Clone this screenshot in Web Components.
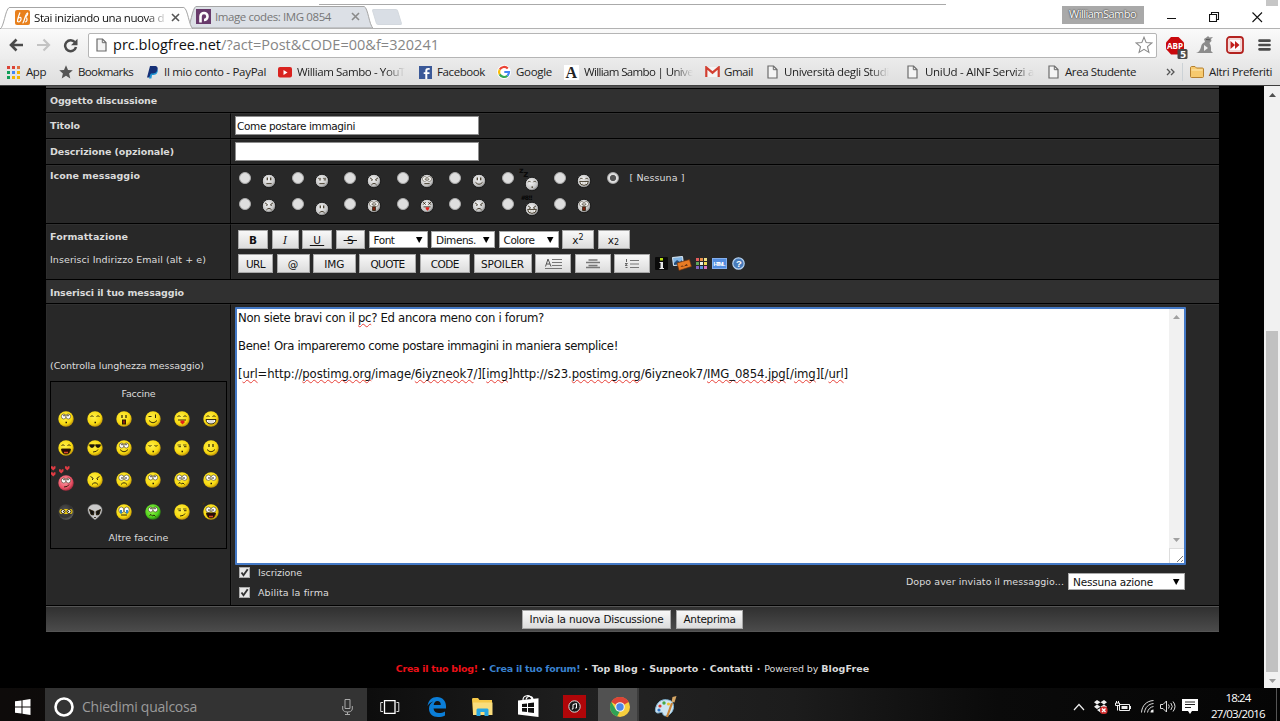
<!DOCTYPE html>
<html lang="it">
<head>
<meta charset="utf-8">
<title>Stai iniziando una nuova discussione</title>
<style>
  html, body {
    margin: 0;
    width: 1280px;
    height: 721px;
    overflow: hidden;
    background: #000;
  }
</style>
</head>
<body>
<desktop-screen></desktop-screen>

<script>
/****** Helpers ******/
const define = (name, html, setup) => {
  const template = document.createElement('template');
  template.innerHTML = html;

  customElements.define(name, class extends HTMLElement {
    constructor () {
      super();
      this.attachShadow({ mode: 'open' });
      this.shadowRoot.appendChild(template.content.cloneNode(true));
    }

    connectedCallback () {
      if (setup) setup(this, this.shadowRoot);
    }
  });
};

const svg = (w, h, body) =>
  `<svg xmlns="http://www.w3.org/2000/svg" width="${w}" height="${h}" viewBox="0 0 ${w} ${h}">${body}</svg>`;

/****** Icons ******/
const icons = {
  blogfree: svg(15, 15, '<rect width="15" height="15" rx="2" fill="#e8801c"/><path d="M5 2.500C4 5 2.500 9 2.500 11.500c2 1 4-1 3.500-3.500-.5-1-2-.5-3 .5M7.500 13c2 0 2.500-9.500 5-10 1 1-1 3.500-2.500 4.500M10 12c2 0 2.500-2 1.500-4.500" fill="none" stroke="#fff" stroke-width="1.200"/>'),
  postimg: svg(15, 15, '<rect width="15" height="15" fill="#683a6b"/><path d="M4.500 13.500V7.500a3.500 3.500 0 1 1 3.500 3.500" fill="none" stroke="#fff" stroke-width="2.600"/>'),
  cross: svg(9, 9, '<path d="M1 1l7 7M8 1l-7 7" stroke="currentColor" stroke-width="1.600"/>'),
  min: svg(10, 11, '<path d="M1 6.500h9" stroke="#111"/>'),
  restore: svg(11, 11, '<path d="M.5 2.500h7v7h-7zM2.500 2.500v-2h7v7h-2" fill="none" stroke="#111" stroke-width="1.100"/>'),
  close: svg(11, 11, '<path d="M.5.5l9.500 9.500M10 .5L.5 10" stroke="#111" stroke-width="1.100"/>'),
  back: svg(15, 14, '<path d="M14 7H2.500M7.500 1.500L2 7l5.500 5.500" fill="none" stroke="#4b4b4b" stroke-width="2.600"/>'),
  forward: svg(15, 14, '<path d="M1 7h11.500M7.500 1.500L13 7l-5.500 5.500" fill="none" stroke="#c3c3c3" stroke-width="2.200"/>'),
  reload: svg(15, 15, '<path d="M12 4.300A5.500 5.500 0 1 0 13 9" fill="none" stroke="#4b4b4b" stroke-width="2.500"/><path d="M14.500 .8v6.400H8z" fill="#4b4b4b"/>'),
  page: svg(11, 14, '<path d="M1 1h5.500l3.500 3.500v8.500h-9z" fill="#f4f4f4" stroke="#6b6b6b" stroke-width="1.200"/><path d="M6.300 1v3.700h3.700" fill="none" stroke="#6b6b6b"/>'),
  star: svg(18, 18, '<path d="M9 1.200l2.200 5.400 5.700.4-4.400 3.700 1.400 5.700L9 13.300l-4.900 3.100 1.400-5.700L1.100 7l5.700-.4z" fill="#fff" stroke="#8a8a8a" stroke-width="1.100"/>'),
  abp: svg(23, 23, '<path d="M6 1h7.500L19 6.500V13l-5.500 5.500H6L1 13V6.500z" fill="#c9090d"/><text x="2" y="13" font-family="Open Sans" font-size="8" font-weight="bold" fill="#fff" textLength="16" lengthAdjust="spacingAndGlyphs">ABP</text><rect x="12.500" y="13" width="10" height="10" rx="1.500" fill="#4a4a4a"/><text x="15" y="21.500" font-family="DejaVu Sans" font-size="9" font-weight="bold" fill="#fff">5</text>'),
  seal: svg(18, 18, '<path d="M0 17c3-.5 4-3 5-6 .5-3 2-4 4-5l-1-3 3-2 1-1 1.500 1.500L17 1l-2 2 .5 2-2 2c2 3 1.500 6 1.500 8l2 2z" fill="#8c8c8c"/><path d="M8 9v6l4-3z" fill="#efefef"/><path d="M10 3.500l4 .3" stroke="#555"/>'),
  skip: svg(18, 18, '<rect x="1" y="1" width="16" height="16" rx="3" fill="#fff" stroke="#b3221f" stroke-width="1.800"/><rect x="3" y="3" width="12" height="12" rx="1" fill="#fff" stroke="#d8817e" stroke-width=".6"/><path d="M4.500 5l4.500 4-4.500 4zM9 5l4.500 4L9 13z" fill="#c2201c"/>'),
  menu: svg(13, 12, '<path d="M1.500 1.700h10M1.500 6h10M1.500 10.300h10" stroke="#4b4b4b" stroke-width="2.700" stroke-linecap="round"/>'),
  apps: svg(14, 13, ['#db4437', '#db4437', '#e07040', '#0f9d58', '#4285f4', '#f4b400', '#0f9d58', '#f4b400', '#f4b400']
    .map((c, i) => `<rect x="${i % 3 * 5}" y="${Math.floor(i / 3) * 5}" width="3" height="3" fill="${c}"/>`).join('')),
  bookmarks: svg(14, 14, '<path d="M7 .3l2 4.600 4.800.4-3.700 3.200 1.200 4.900L7 10.800l-4.300 2.600 1.200-4.900L.2 5.300 5 4.900z" fill="#555"/>'),
  paypal: svg(12, 13, '<path d="M3 0h4.500c3 0 3.600 2 3 4C10 7 8 8 5.500 8H4l-1 3.500H0z" fill="#153077"/><path d="M10.500 3c1 3-1 6-4 6H5l-.6 3.500H2l.5-2 1.500-3h2c2 0 4-1 4.500-4.500z" fill="#1b93d3"/>'),
  youtube: svg(14, 11, '<rect width="14" height="10.500" rx="2" fill="#d9231f"/><path d="M5.500 3v5l4-2.500z" fill="#fff"/>'),
  facebook: svg(13, 13, '<rect width="13" height="13" fill="#3b5998"/><path d="M8.300 13V8h2.200V6.200H8.300V5c0-1 .4-1.300 1.200-1.300h1.200V2C8 1.700 6.300 2.200 6.300 4.800v1.400H4.700V8h1.600v5z" fill="#fff"/>'),
  google: svg(14, 14, '<circle cx="7" cy="7" r="7" fill="#fff"/><g fill="none" stroke-width="2.200"><path d="M10.800 3.600A5 5 0 0 0 2.700 4.600" stroke="#ea4335"/><path d="M2.700 4.600a5 5 0 0 0 0 4.800" stroke="#fbbc05"/><path d="M2.700 9.400a5 5 0 0 0 7.700 1.300" stroke="#34a853"/><path d="M10.400 10.700A5 5 0 0 0 12 7H7.300" stroke="#4285f4"/></g>'),
  academia: svg(15, 15, '<rect width="15" height="15" fill="#fff"/><text x="1.500" y="13" font-family="Liberation Serif" font-size="16" font-weight="bold" fill="#222">A</text>'),
  gmail: svg(15, 12, '<path d="M1 1h13v10H1z" fill="#f5f5f5"/><path d="M1.300 11V1.500l6.200 5.200 6.200-5.200V11" fill="none" stroke="#d23f31" stroke-width="2.200"/>'),
  folder: svg(14, 12, '<path d="M.5 2c0-1 .5-1.500 1-1.500h3.500l1.500 1.500h6c.6 0 1 .5 1 1v7.500c0 .6-.4 1-1 1h-11c-.6 0-1-.4-1-1z" fill="#f7ca6f" stroke="#b58030"/><path d="M1.500 4h11" stroke="#fde8b4"/>'),
  chevrons: svg(9, 8, '<path d="M1 1l3 3-3 3M5 1l3 3-3 3" fill="none" stroke="#555" stroke-width="1.300"/>'),
  down: svg(8, 6, '<path d="M1 0h6.500L4.200 6z" fill="#000"/>'),
  left: svg(17, 10, '<path d="M.5 7.500L3 0l3 7.500M1.500 5h3.500" fill="none" stroke="#555"/><path d="M7 .5h10M7 3.500h10M7 6.500h10M0 9.500h17" stroke="#777"/>'),
  center: svg(14, 10, '<path d="M2.500 1h9M0 3.500h14M2.500 6.500h9M0 8.500h14" stroke="#777" stroke-width="1.300"/>'),
  list: svg(14, 10, '<path d="M1.500 0v3M0 4.500h2.500l-2.500 2h2.500M.5 8.500h2" fill="none" stroke="#666"/><path d="M5 1.500h9M5 5h9M5 8.500h9" stroke="#777"/>'),
  info: svg(13, 13, '<rect width="13" height="13" rx="1" fill="#0a0a0a"/><rect x="5" y="1" width="3" height="2.500" fill="#b7dc12"/><path d="M4.500 5H8v6h1v1H4.500v-1h1V6h-1z" fill="#e6e6e6"/>'),
  cards: svg(20, 15, '<path d="M.5 1.500l10-1 1 8-10 1z" fill="#83b5e3" stroke="#dceaf5"/><path d="M2 7l3-3 3 2 2-2v4l-8 1z" fill="#264f7a"/><path d="M5 7l12.500-3.500 2 7L7 14.500z" fill="#e87b24" stroke="#693010" stroke-width=".7"/><path d="M8.500 11l1.500-1.500 2 .8 2.500-2.300 1.500 1.500z" fill="#5b2a10"/>'),
  palette: svg(12, 12, ['#e45d5d', '#e88f4a', '#efe08a', '#62a85b', '#eef1dc', '#f0dc55', '#8063c0', '#5d92dc', '#d973bf']
    .map((c, i) => `<rect x="${i % 3 * 4}" y="${Math.floor(i / 3) * 4}" width="3" height="3" fill="${c}"/>`).join('')),
  html: svg(15, 11, '<rect x=".5" y=".5" width="14" height="10" fill="#548ee0" stroke="#84b0ef"/><text x="1.500" y="8" font-family="Liberation Sans" font-size="6" font-weight="bold" fill="#fff" textLength="12">HTML</text>'),
  help: svg(13, 13, '<circle cx="6.500" cy="6.500" r="5.700" fill="#477bbb" stroke="#b5d1ef" stroke-width="1.200"/><text x="4" y="10" font-family="Liberation Sans" font-size="9.500" font-weight="bold" fill="#fff">?</text>'),
  windows: svg(16, 16, '<path d="M0 2.300l6.500-.9v6.100H0zM7.500 1.300L15.500 0v7.500h-8zM0 8.500h6.500v6.100L0 13.700zM7.500 8.500h8V16l-8-1.300z" fill="#fff"/>'),
  cortana: svg(20, 20, '<circle cx="10" cy="10" r="8.500" fill="none" stroke="#fff" stroke-width="2.600"/>'),
  mic: svg(11, 16, '<path d="M3 .5h5v9H3z" fill="none" stroke="#aaa"/><path d="M.7 7v3c0 4 9.600 4 9.600 0V7M5.500 13v2.500M3 15.500h5" fill="none" stroke="#aaa"/>'),
  taskview: svg(20, 14, '<path d="M4.500.7h10.500v12.600H4.500z" fill="none" stroke="#fff" stroke-width="1.300"/><path d="M3 2.500H.7v9H3M16.500 2.500h2.300v9h-2.300" fill="none" stroke="#ddd"/>'),
  edge: svg(20, 20, '<path d="M.5 9C1.500 3 5 0 10 0c5.500 0 9 4 9 9v2.500H6.500c.3 3 2.500 4.500 5.500 4.500 2.300 0 4-.5 6-1.500v4c-2 1-4.200 1.500-7 1.500-5.500 0-9-3.200-9-8.500 0-3 1.500-5.500 4.500-7C4 5 2 6.500.5 9zM6.700 8h7.100c0-2.500-1.200-4-3.500-4-2 0-3.400 1.700-3.600 4z" fill="#0b7ed8"/>'),
  explorer: svg(21, 18, '<path d="M0 1.500C0 .5.500 0 1.200 0H6l1.500 2H20v14H1z" fill="#f6c949"/><path d="M1 4.500h19.500V17H1z" fill="#fadd7c"/><path d="M4.500 18v-6.500l1-1h10l1 1V18h-4v-4h-4v4z" fill="#27a7e4"/>'),
  store: svg(21, 22, '<path d="M0 5.500l20.500-2.300V22L0 19.500z" fill="#fff"/><path d="M5 5c0-5 7-6 9-1M8 4.700C9 0 14 .5 15 4" fill="none" stroke="#fff" stroke-width="1.200"/><path d="M4 9l5-.6V12H4zM10 8.300l6-.7V12h-6zM4 13h5v4l-5-.6zM10 13h6v5l-6-.8z" fill="#111"/>'),
  music: svg(23, 23, '<rect width="23" height="23" fill="#b00609"/><circle cx="11.500" cy="11.500" r="5.700" fill="#181818" stroke="#ddd"/><path d="M10 14V9.500l3.500-1V13M8.800 14h1.200M12.300 13h1.200" stroke="#fff" fill="none"/>'),
  chrome: svg(20, 20, '<circle cx="10" cy="10" r="10" fill="#f7cf3d"/><path d="M10 10L1.300 5A10 10 0 0 1 18.700 5z" fill="#dc4437"/><path d="M1.300 5L6 13l4 1-3 5.500A10 10 0 0 1 1.300 5z" fill="#2fa257"/><circle cx="10" cy="10" r="4.800" fill="#f4f4f4"/><circle cx="10" cy="10" r="3.700" fill="#4b86e8"/>'),
  paint: svg(23, 22, '<path d="M2 11C4 4 11 2 17 5c4 3 3 10-1 13-3 3-7 2-7 0-1-3-3-1-5-1-3 0-3-3-2-6z" fill="#cfe5f2" stroke="#83b7d6"/><circle cx="5" cy="14" r="1.600" fill="#2f74c6"/><circle cx="6" cy="10" r="1.600" fill="#d93b2e"/><circle cx="10" cy="7" r="1.700" fill="#47a747"/><circle cx="14.500" cy="8" r="1.600" fill="#eec131"/><path d="M13 21l5-14" stroke="#c98436" stroke-width="2.200"/><path d="M17.500 6l1-5 4-1-2 6.500z" fill="#d6a665"/>'),
  up: svg(12, 8, '<path d="M1 7l5-5.500L11 7" fill="none" stroke="#eee" stroke-width="1.200"/>'),
  dropbox: svg(14, 14, '<path d="M3 0l3.500 2.200L3 4.500 0 2.300zM10 0l3 2.300-3 2.200-3.500-2.300zM3 4.500l3.500 2.300L3 9 0 6.800zM10 4.500l3 2.300L10 9 6.500 6.800zM3 10l3.500-2 3.500 2-3.500 2.500z" fill="#eee"/><rect x="6" y="6.500" width="7.500" height="7.500" rx="3" fill="#cf2d2d"/><path d="M8 8.500l3.500 3.500M11.500 8.500L8 12" stroke="#fff" stroke-width="1.300"/>'),
  battery: svg(16, 12, '<path d="M4.500 3.500h10v6h-10z" fill="none" stroke="#eee"/><path d="M6.500 5h6v3h-6z" fill="#eee"/><path d="M15.500 5v3M.5 2h4v2.500h-4zM1.500 0v2M3.500 0v2M2.500 4.500v5" stroke="#eee" fill="none"/>'),
  wifi: svg(13, 13, '<path d="M.5 12.500C1 5.500 5.500 1 12.500.5M3.500 12.500C4 7.500 7.500 4 12.500 3.500M6.500 12.500c.3-3 3-5.700 6-6" fill="none" stroke="#ddd"/><path d="M9.500 12.500c0-2 1-3 3-3v3z" fill="#eee"/>'),
  sound: svg(16, 13, '<path d="M.5 4.500h2.500l3.500-3.500v11L3 8.500H.5zM8.500 4.500q1.500 2 0 4M10.800 3q3 3.500 0 7M13 1.500q4 5 0 10" fill="none" stroke="#ddd"/>'),
  notes: svg(16, 15, '<path d="M0 0h16v12h-6l-2 3-2-3H0z" fill="#fff"/><path d="M3 3h10M3 5.500h10M3 8.500h6" stroke="#222"/>'),
};

define('ui-icon', `
<style>
  :host {
    display: block;
    flex: none;
  }

  svg {
    display: block;
  }
</style>
<span></span>
`, (el, root) => {
  root.querySelector('span').innerHTML = icons[el.getAttribute('name')];
});

/****** Text set to an exact run length ******/
define('run-text', `
<style>
  :host {
    display: inline-block;
    flex: none;
  }

  span {
    white-space: pre;
  }
</style>
<span><slot></slot></span>
`, (el, root) => {
  const target = Number(el.getAttribute('run'));
  // wait for the whole tree so that inherited fonts are in place
  requestAnimationFrame(() => {
    const span = root.querySelector('span');
    const width = span.getBoundingClientRect().width;
    const count = el.textContent.length;
    if (width && target) span.style.letterSpacing = `${(target - width) / count}px`;
    el.style.width = `${target}px`;
  });
});

/****** Smileys ******/
const eyes = {
  dots: '<path d="M6 4v3M10 4v3" stroke-width="1.200"/>',
  arcs: '<path d="M3.500 6q1.500-3 3 0M9.500 6q1.500-3 3 0"/>',
  half: '<path d="M3.500 5h3.500M9 5h3.500" stroke-width=".7"/><path d="M4.500 6.700h2.500M10 6.700h2.500"/>',
  closed: '<path d="M3.500 5q1.500 3 3 0M9.500 5q1.500 3 3 0"/>',
  angry: '<path d="M3.500 4.500l3 2M12.500 4.500l-3 2M5.500 8V6.500M10.500 8V6.500"/>',
  wink: '<path d="M3.500 5.500h3M10.500 3.500v3.500"/>',
  cross: '<path d="M3.500 3.500l3 3M6.500 3.500l-3 3M9.500 3.500l3 3M12.500 3.500l-3 3"/>',
  white: '<ellipse cx="5.400" cy="5.700" rx="2.600" ry="2.700" fill="#fff" stroke-width=".5"/><ellipse cx="10.600" cy="5.700" rx="2.600" ry="2.700" fill="#fff" stroke-width=".5"/><path d="M6 5.200v1.500M10 5.200v1.500" stroke-width="1.200"/>',
  upward: '<ellipse cx="5.700" cy="5.500" rx="2.300" ry="2.500" fill="#fff" stroke-width=".5"/><ellipse cx="10.300" cy="5.500" rx="2.300" ry="2.500" fill="#fff" stroke-width=".5"/><path d="M6 3.700v1.500M10 3.700v1.500" stroke-width="1.200"/>',
  shades: '<path d="M1.500 5h13" stroke-width="1"/><path d="M3 5h4v1.500q-2 2-4 0zM9 5h4v1.500q-2 2-4 0z" fill="#111"/>',
  tears: '<ellipse cx="5.300" cy="6" rx="2.500" ry="3" fill="#fff" stroke-width=".5"/><ellipse cx="10.700" cy="6" rx="2.500" ry="3" fill="#fff" stroke-width=".5"/><path d="M5 6v3.500M11 6v3.500" stroke="#3389c9" stroke-width="2"/>',
};

const mouths = {
  flat: '<path d="M5 11h6"/>',
  smile: '<path d="M4 9.500q4 4.500 8 0"/>',
  sad: '<path d="M5 12.500q3-3.500 6 0"/>',
  small: '<path d="M7.500 11.500h1.500" stroke-width="1.300"/>',
  smirk: '<path d="M6 12q4 0 5-2.500"/>',
  oh: '<rect x="6.500" y="9" width="3" height="4" fill="#8b1f0c" stroke-width="1"/>',
  laugh: '<path d="M3.500 9h9q-.5 5-4.500 5t-4.500-5z" fill="#2b0905"/><path d="M6 12.500h4" stroke="#d94a2d" stroke-width="1.500"/>',
  tongue: '<path d="M4 9h8"/><path d="M6.500 9.500h4v2l-2 2-2-2z" fill="#e0201b" stroke="none"/>',
  grin: '<path d="M3 8.500h10q-.5 4.500-5 4.500t-5-4.500z" fill="#fff"/><path d="M6 9v3.500M8 9v4M10 9v3.500" stroke-width=".3"/>',
  wavy: '<path d="M4.500 11.500l1.500-1 1.500 1.500L9 11l1.500 1.500"/>',
};

const skins = {
  yellow: ['#fff04a', '#f7d90f', '#b5880a'],
  grey: ['#f4f4f4', '#c4c4c4', '#666'],
  pink: ['#ffa2a9', '#ea5266', '#9c2537'],
  green: ['#9cfa4e', '#4ed01c', '#226d0d'],
  black: ['#555', '#333', '#666'],
};

const extras = {
  zz: '<text x="-7" y="-5" font-family="DejaVu Sans" font-size="9" font-weight="bold" fill="#090909" stroke="none">z</text><text x="-2" y="0" font-family="DejaVu Sans" font-size="10" font-weight="bold" fill="#090909" stroke="none">z</text>',
  curse: '<text x="-5" y="-2" font-family="DejaVu Sans" font-size="7" font-weight="bold" fill="#050505" stroke="none" textLength="14">#8!!</text>',
  hearts: ['-7 -4', '-7 -10', '1 -7', '7 -10']
    .map(p => `<path transform="translate(${p}) scale(.9)" d="M0 1.500h2v1h1v-1h2v2L2.500 6 0 3.500z" fill="#e23b43" stroke="none"/>`).join(''),
  ninja: '<rect x="1.500" y="5" width="13" height="5" rx="2" fill="#f4d21a" stroke="none"/><circle cx="5" cy="7.500" r="2" fill="#fff"/><circle cx="11" cy="7.500" r="2" fill="#fff"/><path d="M5.500 7v1M10.500 7v1"/>',
  horns: '<path d="M2-1q-2-1-2 2M14-1q2-1 2 2" stroke="#4b350c"/>',
};

define('smiley-face', `
<style>
  :host {
    display: block;
    position: relative;
    width: 16px;
    height: 16px;
  }

  :host([skin="grey"]) {
    width: 14px;
    height: 14px;
  }

  div, svg {
    display: block;
    width: 100%;
    height: 100%;
    overflow: visible;
  }
</style>
<div></div>
`, (el, root) => {
  const name = el.getAttribute('skin') || 'yellow';
  const skin = skins[name];
  const ring = name === 'grey' ? 'stroke="#111" stroke-width="1"' : 'stroke="none"';

  let body = `<circle cx="8" cy="8" r="7.700" fill="url(#skin)" ${ring}/>`;
  if (el.getAttribute('kind') === 'alien') {
    body = '<path d="M8 .3c5 0 7.500 3 7 6.500-.5 4-4 7-7 9-3-2-6.500-5-7-9C.5 3.300 3 .3 8 .3z" fill="#c9c9c9" stroke="#777" stroke-width=".6"/><path d="M2.500 5.500l4.500 2-.5 3.500-2.500-.5zM13.500 5.500L9 7.500l.5 3.500 2.500-.5z" fill="#111"/><path d="M7 13.500h2" stroke-width=".8"/>';
  } else {
    body += (eyes[el.getAttribute('eyes')] || '') + (mouths[el.getAttribute('mouth')] || '');
  }

  root.querySelector('div').innerHTML = `
    <svg viewBox="0 0 16 16" fill="none" stroke="#241a05" stroke-width=".9">
      <radialGradient id="skin" cx=".42" cy=".38" r=".65">
        <stop offset="0" stop-color="${skin[0]}"/>
        <stop offset=".7" stop-color="${skin[1]}"/>
        <stop offset="1" stop-color="${skin[2]}"/>
      </radialGradient>
      ${body}${extras[el.getAttribute('extra')] || ''}
    </svg>`;
});

/****** Browser tabs ******/
define('browser-tab', `
<style>
  :host {
    display: flex;
    align-items: center;
    position: relative;
    box-sizing: border-box;
    height: 23px;
    padding: 0 13px 0 15px;
    color: #111;
    font-size: 11.500px;
    --fill: #fefefe;
  }

  :host([inactive]) {
    margin-left: -6px;
    padding-left: 9px;
    color: #777;
    --fill: #dce0e6;
  }

  .shape {
    position: absolute;
    inset: 0;
    width: 100%;
    height: 100%;
  }

  .icon, .close, .title {
    position: relative;
  }

  .icon svg {
    display: block;
  }

  .title {
    flex: 1;
    margin-left: 4px;
    overflow: hidden;
    line-height: 20px;
  }

  :host([fade]) .title {
    -webkit-mask-image: linear-gradient(90deg, #000 82%, transparent 98%);
  }

  .close {
    color: #555;
  }

  :host([inactive]) .close {
    color: #8a8a8a;
  }
</style>
<svg class="shape" preserveAspectRatio="none" viewBox="0 0 190 23">
  <path d="M0 23C4 21 5 4 9 1.500h172C185 3 186 20 190 23z" fill="var(--fill)" stroke="#a5a5a5" vector-effect="non-scaling-stroke"/>
</svg>
<div class="icon"></div>
<div class="title"><slot></slot></div>
<ui-icon class="close" name="cross"></ui-icon>
`, (el, root) => {
  root.querySelector('.icon').innerHTML = icons[el.getAttribute('icon')];
});

/****** Bookmark ******/
define('bookmark-item', `
<style>
  :host {
    display: flex;
    align-items: center;
    flex: none;
    height: 26px;
    color: #222;
    font-size: 11.500px;
  }

  .icon {
    flex: none;
    width: var(--lead, 19px);
  }

  .icon svg {
    display: block;
  }

  .label {
    line-height: 24px;
    height: 25px;
  }

  :host([fade]) .label {
    -webkit-mask-image: linear-gradient(90deg, #000 82%, transparent);
  }
</style>
<div class="icon"></div>
<div class="label"><slot></slot></div>
`, (el, root) => {
  root.querySelector('.icon').innerHTML = icons[el.getAttribute('icon')];
});

/****** Browser window ******/
define('browser-chrome', `
<style>
  :host {
    display: block;
    position: relative;
    height: 86px;
    font: 12px "Open Sans", "Noto Sans", sans-serif;
    background: #fff;
  }

  .strip {
    display: flex;
    align-items: flex-end;
    height: 28px;
    border-bottom: 1px solid #b2b2b2;
  }

  .first {
    z-index: 1;
    margin-bottom: -1px;
  }

  .new-tab {
    width: 24px;
    height: 14px;
    margin: 0 0 3px 1px;
    background: #d9dee5;
    border: 1px solid #d3d8de;
    border-radius: 2px;
    transform: skewX(17deg);
  }

  .user {
    box-sizing: border-box;
    width: 82px;
    height: 18px;
    margin: 0 22px 4px auto;
    padding-left: 7px;
    background: #a9a9a9;
    color: #fff;
    font-size: 11px;
    line-height: 16px;
    text-shadow: 0 0 1px #333, 0 0 2px #333;
  }

  .window {
    display: flex;
    gap: 32.500px;
    margin: 0 17px 5px 0;
  }

  .toolbar {
    display: flex;
    align-items: center;
    height: 30px;
    padding-top: 2px;
    box-sizing: border-box;
    background: linear-gradient(#fafafa, #ececec);
  }

  .address {
    display: flex;
    align-items: center;
    box-sizing: border-box;
    width: 1069px;
    height: 25px;
    margin: 0 8px 0 10px;
    padding: 0 3px 0 7px;
    border: 1px solid #b5b5b5;
    border-radius: 2px;
    background: #fff;
    color: #868686;
    font-size: 14.500px;
  }

  .address b {
    font-weight: 400;
    color: #111;
  }

  .address run-text {
    margin-left: 6px;
    line-height: 20px;
  }

  .address .star {
    margin-left: auto;
  }

  .bookmarks {
    display: flex;
    align-items: center;
    height: 26px;
    padding-left: 7px;
    background: linear-gradient(#ebebeb, #dedede);
  }

  .bookmarks .sep {
    width: 1px;
    height: 18px;
    margin: 0 7px;
    background: #ccd2d6;
  }

  .bottom {
    height: 1px;
    background: #3e3e3e;
  }

  .edge, .corner {
    position: absolute;
    left: 319px;
    top: 4px;
    width: 627px;
    height: 1px;
    background: #aaa;
  }

  .corner {
    left: 1266px;
    top: 0;
    width: 12px;
    height: 6px;
    background: #c6c6c6;
  }
</style>
<div class="edge"></div>
<div class="corner"></div>
<div class="strip">
  <browser-tab class="first" icon="blogfree" fade style="width:193px"><run-text run="130">Stai iniziando una nuova d</run-text></browser-tab>
  <browser-tab inactive icon="postimg" style="width:186px"><run-text run="116">Image codes: IMG 0854</run-text></browser-tab>
  <div class="new-tab"></div>
  <div class="user"><run-text run="67">WilliamSambo</run-text></div>
  <div class="window">
    <ui-icon name="min"></ui-icon>
    <ui-icon name="restore"></ui-icon>
    <ui-icon name="close"></ui-icon>
  </div>
</div>
<div class="toolbar">
  <ui-icon name="back" style="margin-left:9px"></ui-icon>
  <ui-icon name="forward" style="margin-left:12px"></ui-icon>
  <ui-icon name="reload" style="margin-left:12px"></ui-icon>
  <div class="address">
    <ui-icon name="page"></ui-icon>
    <run-text run="326"><b>prc.blogfree.net</b>/?act=Post&amp;CODE=00&amp;f=320241</run-text>
    <ui-icon class="star" name="star"></ui-icon>
  </div>
  <ui-icon name="abp" style="margin-top:4px"></ui-icon>
  <ui-icon name="seal" style="margin-left:8px"></ui-icon>
  <ui-icon name="skip" style="margin-left:12px"></ui-icon>
  <ui-icon name="menu" style="margin-left:14px"></ui-icon>
</div>
<div class="bookmarks">
  <bookmark-item icon="apps" style="width:52px"><run-text run="20">App</run-text></bookmark-item>
  <bookmark-item icon="bookmarks" style="width:88px"><run-text run="55">Bookmarks</run-text></bookmark-item>
  <bookmark-item icon="paypal" style="width:131px;--lead:17px"><run-text run="102">Il mio conto - PayPal</run-text></bookmark-item>
  <bookmark-item icon="youtube" fade style="width:141px"><run-text run="108">William Sambo - YouT</run-text></bookmark-item>
  <bookmark-item icon="facebook" style="width:78px;--lead:18px"><run-text run="48">Facebook</run-text></bookmark-item>
  <bookmark-item icon="google" style="width:67px"><run-text run="36">Google</run-text></bookmark-item>
  <bookmark-item icon="academia" fade style="width:141px;--lead:20px"><run-text run="109">William Sambo | Unive</run-text></bookmark-item>
  <bookmark-item icon="gmail" style="width:62px"><run-text run="29">Gmail</run-text></bookmark-item>
  <bookmark-item icon="page" fade style="width:140px;--lead:17px"><run-text run="105">Università degli Studi</run-text></bookmark-item>
  <bookmark-item icon="page" fade style="width:141px;--lead:18px"><run-text run="109">UniUd - AINF Servizi a</run-text></bookmark-item>
  <bookmark-item icon="page" style="width:118px;--lead:17px"><run-text run="71">Area Studente</run-text></bookmark-item>
  <ui-icon name="chevrons"></ui-icon>
  <div class="sep"></div>
  <bookmark-item icon="folder"><run-text run="63">Altri Preferiti</run-text></bookmark-item>
</div>
<div class="bottom"></div>
`);

/****** Form controls ******/
define('form-button', `
<style>
  :host {
    display: flex;
    align-items: center;
    justify-content: center;
    box-sizing: border-box;
    flex: none;
    height: 19px;
    padding-top: 1px;
    border: 1px solid #a8a8a8;
    background: linear-gradient(#f8f8f8, #dcdcdc);
    color: #111;
    font: 10.500px/15px "DejaVu Sans", sans-serif;
  }
</style>
<slot></slot>
`);

define('form-select', `
<style>
  :host {
    display: flex;
    align-items: center;
    justify-content: space-between;
    box-sizing: border-box;
    flex: none;
    height: 17px;
    padding: 0 4px;
    border: 1px solid #a9a9a9;
    background: #fff;
    color: #111;
    font: 10.500px/15px "DejaVu Sans", sans-serif;
  }

  .text {
    margin-top: 1px;
  }
</style>
<div class="text"><slot></slot></div>
<ui-icon name="down"></ui-icon>
`);

define('form-field', `
<style>
  :host {
    display: block;
    box-sizing: border-box;
    width: 244px;
    height: 19px;
    padding-left: 1px;
    border: 1px solid #8d8d8d;
    background: #fff;
    color: #111;
    font: 10.500px/18px "DejaVu Sans", sans-serif;
  }
</style>
<slot></slot>
`);

define('radio-dot', `
<style>
  :host {
    display: block;
    box-sizing: border-box;
    width: 12px;
    height: 12px;
    border: 1px solid #aaa;
    border-radius: 50%;
    background: #dedede;
  }

  :host([checked]) {
    background: radial-gradient(circle, #555 0 2.800px, #ddd 3.300px);
  }
</style>
`);

define('check-line', `
<style>
  :host {
    display: flex;
    align-items: center;
    height: 19.500px;
    gap: 8px;
  }

  svg {
    display: block;
  }

  .text {
    margin-top: 1px;
  }
</style>
<svg width="11" height="11"><rect x=".5" y=".5" width="10" height="10" fill="#e6e6e6" stroke="#aaa"/><path d="M2.500 5.500l2 2.700L8.700 2.300" fill="none" stroke="#333" stroke-width="1.900"/></svg>
<div class="text"><slot></slot></div>
`);

/****** Table row: label cell and content cell ******/
define('forum-row', `
<style>
  :host {
    display: flex;
    box-sizing: border-box;
    border-bottom: 1px solid #000;
  }

  .label, .content {
    box-sizing: border-box;
    background: #282828;
    border-top: 1px solid #303030;
    border-left: 1px solid #2d2d2d;
  }

  .label {
    width: 185px;
    padding-left: 3px;
    border-right: 1px solid #050505;
  }

  .content {
    flex: 1;
    padding-left: 3px;
  }

  :host([wide]) .label {
    flex: 1;
    background: #303030;
    border-right: 0;
  }

  :host([wide]) .content {
    display: none;
  }
</style>
<div class="label"><slot name="label"></slot></div>
<div class="content"><slot></slot></div>
`);

/****** Message icons ******/
define('icon-choice', `
<style>
  :host {
    display: grid;
    grid-template-columns: repeat(7, 52.500px) 80px;
    grid-template-rows: 25.500px 25.500px;
    padding: 0 0 0 4px;
  }

  .item {
    display: flex;
    height: 24px;
    align-items: center;
    gap: 11px;
  }

  smiley-face {
    top: 2.500px;
  }

  .low {
    top: 5.500px;
  }
</style>
<div class="item"><radio-dot></radio-dot><smiley-face skin="grey" eyes="dots" mouth="flat"></smiley-face></div>
<div class="item"><radio-dot></radio-dot><smiley-face skin="grey" eyes="half" mouth="flat"></smiley-face></div>
<div class="item"><radio-dot></radio-dot><smiley-face skin="grey" eyes="angry" mouth="sad"></smiley-face></div>
<div class="item"><radio-dot></radio-dot><smiley-face skin="grey" eyes="white" mouth="flat"></smiley-face></div>
<div class="item"><radio-dot></radio-dot><smiley-face skin="grey" eyes="dots" mouth="smile"></smiley-face></div>
<div class="item"><radio-dot></radio-dot><smiley-face class="low" skin="grey" eyes="arcs" mouth="small" extra="zz"></smiley-face></div>
<div class="item"><radio-dot></radio-dot><smiley-face skin="grey" eyes="arcs" mouth="grin"></smiley-face></div>
<div class="item"><radio-dot checked></radio-dot><run-text run="55">[ Nessuna ]</run-text></div>
<div class="item"><radio-dot></radio-dot><smiley-face skin="grey" eyes="angry" mouth="sad"></smiley-face></div>
<div class="item"><radio-dot></radio-dot><smiley-face class="low" skin="grey" eyes="dots" mouth="sad"></smiley-face></div>
<div class="item"><radio-dot></radio-dot><smiley-face skin="grey" eyes="white" mouth="oh"></smiley-face></div>
<div class="item"><radio-dot></radio-dot><smiley-face skin="grey" eyes="cross" mouth="tongue"></smiley-face></div>
<div class="item"><radio-dot></radio-dot><smiley-face skin="grey" eyes="angry" mouth="sad"></smiley-face></div>
<div class="item"><radio-dot></radio-dot><smiley-face class="low" skin="grey" eyes="angry" mouth="grin" extra="curse"></smiley-face></div>
<div class="item"><radio-dot></radio-dot><smiley-face skin="grey" eyes="white" mouth="oh"></smiley-face></div>
`);

/****** Formatting buttons ******/
define('format-bar', `
<style>
  :host {
    display: block;
    padding: 5px 0 0 3px;
  }

  .line {
    display: flex;
    align-items: center;
    height: 19px;
    margin-bottom: 5px;
    gap: 3.500px;
  }

  i {
    font-family: "DejaVu Serif", serif;
  }

  small {
    font-size: 8px;
  }

  .up {
    margin-top: -5px;
  }

  .down {
    margin-top: 5px;
  }

  .tools {
    display: flex;
    align-items: center;
    margin-left: 1px;
    gap: 4.300px;
  }
</style>
<div class="line">
  <form-button style="width:30px"><b>B</b></form-button>
  <form-button style="width:27px"><i>I</i></form-button>
  <form-button style="width:30px"><u>&nbsp;U&nbsp;</u></form-button>
  <form-button style="width:29.500px"><s>&nbsp;S&nbsp;</s></form-button>
  <form-select style="width:59px"><run-text run="21">Font</run-text></form-select>
  <form-select style="width:64px"><run-text run="40">Dimens.</run-text></form-select>
  <form-select style="width:60px"><run-text run="31">Colore</run-text></form-select>
  <form-button style="width:32px">x<small class="up">2</small></form-button>
  <form-button style="width:32px">x<small class="down">2</small></form-button>
</div>
<div class="line">
  <form-button style="width:35px"><run-text run="19">URL</run-text></form-button>
  <form-button style="width:33px">@</form-button>
  <form-button style="width:42.500px"><run-text run="20">IMG</run-text></form-button>
  <form-button style="width:57px"><run-text run="34">QUOTE</run-text></form-button>
  <form-button style="width:50.500px"><run-text run="28">CODE</run-text></form-button>
  <form-button style="width:58px"><run-text run="43">SPOILER</run-text></form-button>
  <form-button style="width:36px"><ui-icon name="left"></ui-icon></form-button>
  <form-button style="width:36px"><ui-icon name="center"></ui-icon></form-button>
  <form-button style="width:36px"><ui-icon name="list"></ui-icon></form-button>
  <div class="tools">
    <ui-icon name="info"></ui-icon>
    <ui-icon name="cards"></ui-icon>
    <ui-icon name="palette"></ui-icon>
    <ui-icon name="html"></ui-icon>
    <ui-icon name="help"></ui-icon>
  </div>
</div>
`);

/****** Smiley panel ******/
define('smiley-panel', `
<style>
  :host {
    display: block;
    box-sizing: border-box;
    width: 177px;
    height: 168px;
    border: 1px solid #000;
    text-align: center;
  }

  .caption {
    height: 22px;
    line-height: 24px;
  }

  .grid {
    display: grid;
    grid-template-columns: repeat(6, 29px);
    grid-template-rows: 29px 30px 33px 31px;
    place-items: center;
  }

  .heart {
    top: 3px;
  }
</style>
<div class="caption"><run-text run="34">Faccine</run-text></div>
<div class="grid">
  <smiley-face eyes="upward" mouth="small"></smiley-face>
  <smiley-face eyes="arcs" mouth="small"></smiley-face>
  <smiley-face eyes="dots" mouth="oh"></smiley-face>
  <smiley-face eyes="wink" mouth="smile"></smiley-face>
  <smiley-face eyes="arcs" mouth="tongue"></smiley-face>
  <smiley-face eyes="arcs" mouth="grin"></smiley-face>
  <smiley-face eyes="arcs" mouth="laugh"></smiley-face>
  <smiley-face eyes="shades" mouth="smirk"></smiley-face>
  <smiley-face eyes="upward" mouth="smile"></smiley-face>
  <smiley-face eyes="closed" mouth="small"></smiley-face>
  <smiley-face eyes="half" mouth="small"></smiley-face>
  <smiley-face eyes="dots" mouth="smile"></smiley-face>
  <smiley-face class="heart" skin="pink" eyes="upward" mouth="smirk" extra="hearts"></smiley-face>
  <smiley-face eyes="angry" mouth="sad"></smiley-face>
  <smiley-face eyes="white" mouth="sad"></smiley-face>
  <smiley-face eyes="upward" mouth="small"></smiley-face>
  <smiley-face eyes="white" mouth="wavy"></smiley-face>
  <smiley-face eyes="white" mouth="small"></smiley-face>
  <smiley-face skin="black" extra="ninja"></smiley-face>
  <smiley-face kind="alien"></smiley-face>
  <smiley-face eyes="tears" mouth="flat"></smiley-face>
  <smiley-face skin="green" eyes="upward" mouth="wavy"></smiley-face>
  <smiley-face eyes="half" mouth="smirk"></smiley-face>
  <smiley-face eyes="white" mouth="laugh" extra="horns"></smiley-face>
</div>
<div class="caption" style="margin-top:-1px"><run-text run="60">Altre faccine</run-text></div>
`);

/****** Message editor ******/
define('message-editor', `
<style>
  :host {
    display: flex;
    box-sizing: border-box;
    width: 951px;
    height: 258px;
    border: 2px solid #4479c6;
    border-radius: 1px;
    background: #fff;
    color: #111;
    font: 11.700px/14px "DejaVu Sans", sans-serif;
    letter-spacing: 0;
  }

  .text {
    flex: 1;
    padding: 2px 0 0 1px;
  }

  p {
    margin: 0 0 14px;
    height: 14px;
  }

  .wave {
    text-decoration: underline wavy #e8423a .8px;
    text-underline-offset: 1px;
    text-decoration-skip-ink: none;
  }

  .bar {
    display: flex;
    flex-direction: column;
    align-items: center;
    justify-content: space-between;
    width: 15px;
    background: #f1f1f1;
  }

  .bar svg {
    display: block;
    margin-top: 6px;
  }

  .bar .grip {
    margin: 6px 0 0;
    background: #fff;
    border-top: 1px solid #ddd;
    border-left: 1px solid #ddd;
  }
</style>
<div class="text">
  <p><run-text run="306">Non siete bravi con il <span class="wave">pc</span>? Ed ancora meno con i forum?</run-text></p>
  <p><run-text run="380">Bene! Ora impareremo come postare immagini in maniera semplice!</run-text></p>
  <p><run-text run="610">[<span class="wave">url</span>=http://<span class="wave">postimg.org</span>/image/<span class="wave">6iyzneok7</span>/][<span class="wave">img</span>]http://s23.<span class="wave">postimg.org</span>/6iyzneok7/<span class="wave">IMG_0854.jpg</span>[/<span class="wave">img</span>][/<span class="wave">url</span>]</run-text></p>
</div>
<div class="bar">
  <svg width="7" height="4"><path d="M0 4h7L3.500 0z" fill="#a0a0a0"/></svg>
  <div>
    <svg width="15" height="4"><path d="M4 0h7L7.500 4z" fill="#a0a0a0"/></svg>
    <svg class="grip" width="14" height="14"><path d="M7 13l6-6M11 13l2-2" stroke="#777"/></svg>
  </div>
</div>
`);

/****** Forum page ******/
define('forum-page', `
<style>
  :host {
    display: flex;
    height: 602px;
    background: #000;
    color: #ddd;
    font: 9.500px/14px "DejaVu Sans", sans-serif;
  }

  .page {
    flex: 1;
    padding-left: 46px;
  }

  .table {
    width: 1173px;
  }

  .top {
    height: 2px;
    background: #505050;
    border-bottom: 1px solid #000;
  }

  b {
    display: block;
    color: #dadada;
  }

  .actions {
    display: flex;
    align-items: center;
    justify-content: center;
    gap: 5px;
    box-sizing: border-box;
    height: 26px;
    border-top: 1px solid #555;
    border-bottom: 1px solid #555;
    background: linear-gradient(#303030, #4b4b4b);
  }

  .options {
    display: flex;
    justify-content: space-between;
    align-items: flex-start;
    width: 950px;
  }

  .checks {
    margin-top: -2px;
    padding-left: 4px;
  }

  .after {
    display: flex;
    align-items: center;
    gap: 4px;
    margin-top: 8px;
  }

  .credits {
    display: flex;
    justify-content: center;
    width: 1173px;
    padding: 30px 0 0;
  }

  .credits i {
    width: 11.500px;
    font-style: normal;
    font-weight: bold;
    text-align: center;
  }

  .scroll {
    display: flex;
    flex-direction: column;
    align-items: center;
    width: 16px;
    background: #f1f1f1;
  }

  .thumb {
    width: 12px;
    height: 341px;
    margin: 233px 0 7px;
    background: #c1c1c1;
  }

  .scroll svg {
    flex: none;
  }
</style>
<div class="page">
  <div class="table">
    <div class="top"></div>
    <forum-row wide style="height:24px"><b slot="label" style="padding-top:4px"><run-text run="107">Oggetto discussione</run-text></b></forum-row>
    <forum-row style="height:26px">
      <b slot="label" style="padding-top:5px"><run-text run="30">Titolo</run-text></b>
      <form-field style="margin-top:2px"><run-text run="118">Come postare immagini</run-text></form-field>
    </forum-row>
    <forum-row style="height:26px">
      <b slot="label" style="padding-top:5px"><run-text run="124">Descrizione (opzionale)</run-text></b>
      <form-field style="margin-top:2px"></form-field>
    </forum-row>
    <forum-row style="height:59px">
      <b slot="label" style="padding-top:3px"><run-text run="90">Icone messaggio</run-text></b>
      <icon-choice></icon-choice>
    </forum-row>
    <forum-row style="height:56px">
      <div slot="label" style="padding-top:5px">
        <b><run-text run="78">Formattazione</run-text></b>
        <run-text run="156" style="margin-top:9px">Inserisci Indirizzo Email (alt + e)</run-text>
      </div>
      <format-bar></format-bar>
    </forum-row>
    <forum-row wide style="height:24px"><b slot="label" style="padding-top:5px"><run-text run="134">Inserisci il tuo messaggio</run-text></b></forum-row>
    <forum-row style="height:302px">
      <div slot="label" style="padding-top:54px">
        <run-text run="154" style="margin-bottom:8px">(Controlla lunghezza messaggio)</run-text>
        <smiley-panel></smiley-panel>
      </div>
      <message-editor style="margin-top:2px"></message-editor>
      <div class="options">
        <div class="checks">
          <check-line><run-text run="44">Iscrizione</run-text></check-line>
          <check-line><run-text run="71">Abilita la firma</run-text></check-line>
        </div>
        <div class="after">
          <run-text run="158">Dopo aver inviato il messaggio...</run-text>
          <form-select style="width:117px"><run-text run="80">Nessuna azione</run-text></form-select>
        </div>
      </div>
    </forum-row>
    <div class="actions">
      <form-button style="width:149px"><run-text run="134">Invia la nuova Discussione</run-text></form-button>
      <form-button style="width:67px"><run-text run="52">Anteprima</run-text></form-button>
    </div>
  </div>
  <div class="credits">
    <b style="color:#ee1018"><run-text run="82">Crea il tuo blog!</run-text></b><i>·</i>
    <b style="color:#3a82cf"><run-text run="91">Crea il tuo forum!</run-text></b><i>·</i>
    <b><run-text run="46">Top Blog</run-text></b><i>·</i>
    <b><run-text run="49">Supporto</run-text></b><i>·</i>
    <b><run-text run="43">Contatti</run-text></b><i>·</i>
    <run-text run="57">Powered by </run-text><b><run-text run="48">BlogFree</run-text></b>
  </div>
</div>
<div class="scroll">
  <svg width="7" height="4" style="margin:7px 0 1px"><path d="M0 4h7L3.500 0z" fill="#505050"/></svg>
  <div class="thumb"></div>
  <svg width="7" height="4"><path d="M0 0h7L3.500 4z" fill="#999"/></svg>
</div>
`);

/****** Taskbar ******/
define('task-bar', `
<style>
  :host {
    display: flex;
    align-items: center;
    height: 33px;
    background: linear-gradient(90deg, #0e0b0a 0, #0c0c0c 28%, #151515 36%, #222 48%, #1c1c1c 62%, #0a0a0a 78%, #050505);
    color: #fff;
    font: 11.500px "Open Sans", "Noto Sans", sans-serif;
  }

  ui-icon {
    margin-top: 4px;
  }

  .search {
    display: flex;
    align-items: center;
    box-sizing: border-box;
    width: 322px;
    height: 33px;
    margin-left: 14px;
    padding: 0 14px 0 9px;
    background: #333;
    color: #9b9b9b;
    font-size: 14px;
  }

  .search run-text {
    margin: 4px auto 0 8px;
  }

  .active {
    display: flex;
    align-items: center;
    justify-content: center;
    width: 41px;
    height: 33px;
    margin-left: 12px;
    padding-left: 5px;
    box-sizing: border-box;
    background: #515151;
    border-right: 2px solid #3c3c3c;
  }

  .tray {
    display: flex;
    align-items: center;
    margin-left: auto;
    gap: 9px;
  }

  .clock {
    display: flex;
    flex-direction: column;
    align-items: center;
    width: 54px;
    margin: 2px 11px 0 4px;
    line-height: 15.500px;
  }

  .show {
    width: 3px;
    height: 33px;
    border-left: 1px solid #555;
  }
</style>
<ui-icon name="windows" style="margin-left:15px"></ui-icon>
<div class="search">
  <ui-icon name="cortana"></ui-icon>
  <run-text run="115">Chiedimi qualcosa</run-text>
  <ui-icon name="mic"></ui-icon>
</div>
<ui-icon name="taskview" style="margin-left:13px"></ui-icon>
<ui-icon name="edge" style="margin-left:27px"></ui-icon>
<ui-icon name="explorer" style="margin-left:25px"></ui-icon>
<ui-icon name="store" style="margin-left:25px;margin-top:2px"></ui-icon>
<ui-icon name="music" style="margin-left:24px"></ui-icon>
<div class="active"><ui-icon name="chrome"></ui-icon></div>
<ui-icon name="paint" style="margin-left:15px"></ui-icon>
<div class="tray">
  <ui-icon name="up"></ui-icon>
  <ui-icon name="dropbox"></ui-icon>
  <ui-icon name="battery" style="margin-left:-2px"></ui-icon>
  <ui-icon name="wifi" style="margin-left:1px"></ui-icon>
  <ui-icon name="sound" style="margin-left:-3px"></ui-icon>
  <ui-icon name="notes" style="margin-left:-3px"></ui-icon>
  <div class="clock">
    <run-text run="25">18:24</run-text>
    <run-text run="54">27/03/2016</run-text>
  </div>
</div>
<div class="show"></div>
`);

define('desktop-screen', `
<style>
  :host {
    display: flex;
    flex-direction: column;
    width: 1280px;
    height: 721px;
    overflow: hidden;
  }
</style>
<browser-chrome></browser-chrome>
<forum-page></forum-page>
<task-bar></task-bar>
`);
</script>
</body>
</html>
